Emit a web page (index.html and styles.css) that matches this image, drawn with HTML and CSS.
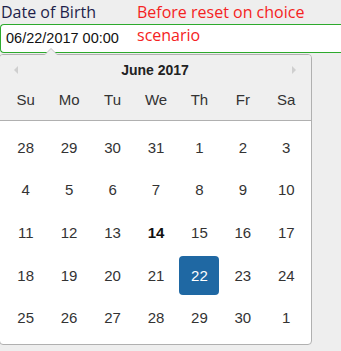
FILE: index.html
```html
<!DOCTYPE html>
<html>
<head>
<meta charset="utf-8">
<link rel="stylesheet" href="styles.css">
</head>
<body>
<div class="field">
  <div class="label">Date of Birth</div>
  <div class="input">06/22/2017 00:00</div>
  <div class="note">Before reset on choice scenario</div>
  <div class="picker">
    <div class="head">
      <div class="title-row">
        <span class="arrow arrow-left"></span>
        <span class="title">June 2017</span>
        <span class="arrow arrow-right"></span>
      </div>
      <div class="grid dow">
        <span>Su</span><span>Mo</span><span>Tu</span><span>We</span><span>Th</span><span>Fr</span><span>Sa</span>
      </div>
    </div>
    <div class="grid days">
      <span>28</span><span>29</span><span>30</span><span>31</span><span>1</span><span>2</span><span>3</span>
      <span>4</span><span>5</span><span>6</span><span>7</span><span>8</span><span>9</span><span>10</span>
      <span>11</span><span>12</span><span>13</span><span class="today">14</span><span>15</span><span>16</span><span>17</span>
      <span>18</span><span>19</span><span>20</span><span>21</span><span class="active">22</span><span>23</span><span>24</span>
      <span>25</span><span>26</span><span>27</span><span>28</span><span>29</span><span>30</span><span>1</span>
    </div>
  </div>
</div>
</body>
</html>
```

FILE: styles.css
```css
html, body {
  margin: 0;
  padding: 0;
  background: #eeeeee;
  overflow: hidden;
}
.field {
  position: relative;
  width: 341px;
}
.label {
  font-family: "Open Sans", sans-serif;
  font-size: 16px;
  line-height: 24px;
  color: #1e1e4a;
  padding-left: 1px;
}
.input {
  box-sizing: border-box;
  height: 29px;
  width: 341px;
  border: 1px solid #2daa2d;
  border-right: none;
  border-radius: 4px 0 0 4px;
  background: #fff;
  font-family: "Liberation Sans", Arial, sans-serif;
  font-size: 14.5px;
  line-height: 27px;
  color: #111;
  padding-left: 5px;
}
.note {
  position: absolute;
  left: 137px;
  top: 1px;
  width: 185px;
  font-family: "Open Sans", sans-serif;
  font-size: 16px;
  line-height: 23px;
  color: #f52222;
  z-index: 2;
}
.picker {
  position: relative;
  box-sizing: border-box;
  width: 313px;
  margin: 1px 0 0 -1px;
  border: 1px solid #b0b0b0;
  border-radius: 4px;
  background: #fff;
  font-family: "Liberation Sans", Arial, sans-serif;
  color: #333;
}
.picker::before {
  content: "";
  position: absolute;
  left: 44px;
  top: -7px;
  border-left: 7px solid transparent;
  border-right: 7px solid transparent;
  border-bottom: 7px solid #c4c4c4;
}
.picker::after {
  content: "";
  position: absolute;
  left: 45px;
  top: -6px;
  border-left: 6px solid transparent;
  border-right: 6px solid transparent;
  border-bottom: 6px solid #efefef;
}
.head {
  background: #efefef;
  border-bottom: 1px solid #b0b0b0;
  border-radius: 3px 3px 0 0;
  padding-bottom: 7px;
}
.title-row {
  height: 30px;
  display: flex;
  align-items: center;
  justify-content: space-between;
  padding: 0 15px 0 14px;
}
.title {
  font-weight: bold;
  font-size: 14px;
  color: #222;
}
.arrow {
  width: 0;
  height: 0;
  border-top: 4px solid transparent;
  border-bottom: 4px solid transparent;
}
.arrow-left {
  border-right: 4px solid #cfcfcf;
}
.arrow-right {
  border-left: 4px solid #cfcfcf;
}
.grid {
  display: grid;
  grid-template-columns: repeat(7, 1fr);
  padding: 0 3px 0 4px;
}
.dow span {
  height: 28px;
  display: flex;
  align-items: center;
  justify-content: center;
  font-size: 15px;
  color: #333;
}
.days {
  padding-top: 5px;
  padding-bottom: 5px;
  grid-auto-rows: 42.6px;
}
.days span {
  width: 40px;
  height: 39px;
  margin: auto;
  display: flex;
  align-items: center;
  justify-content: center;
  font-size: 15px;
  color: #333;
  border-radius: 4px;
}
.days .today {
  font-weight: bold;
  color: #111;
}
.days .active {
  background: #1f68a3;
  color: #fff;
}
```
